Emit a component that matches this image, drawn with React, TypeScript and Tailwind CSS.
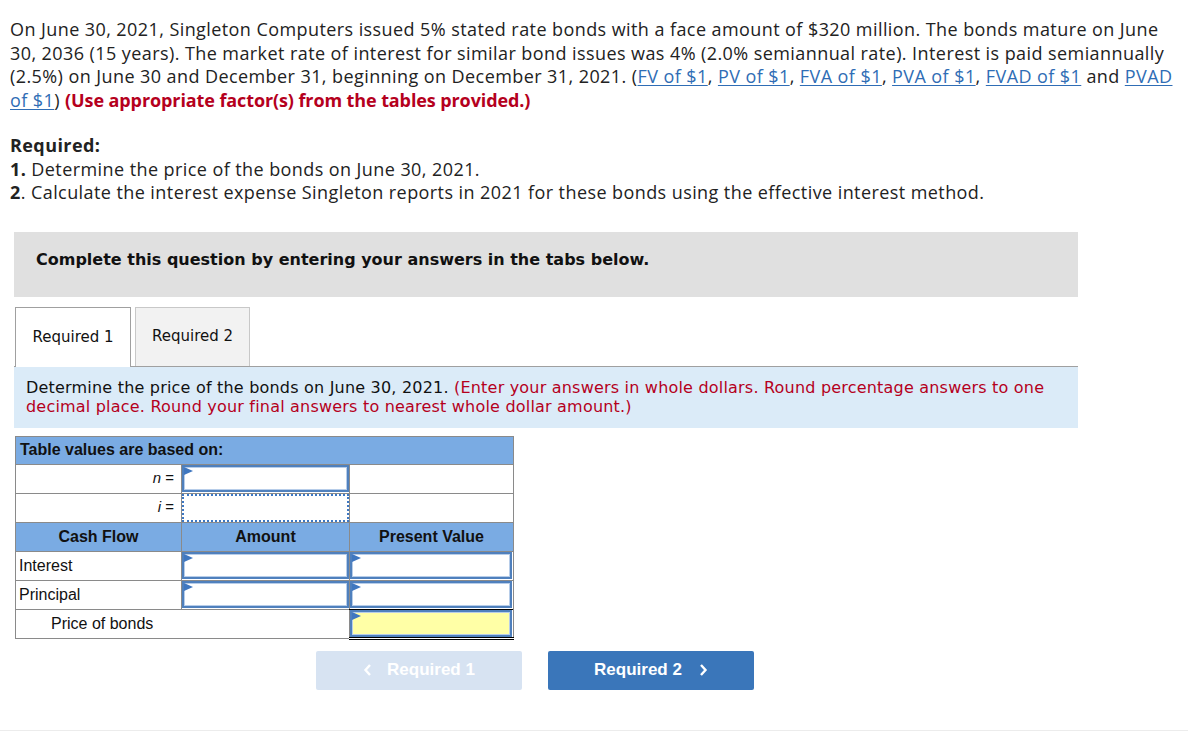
import React from "react";

const Link: React.FC<{ children: React.ReactNode }> = ({ children }) => (
  <a className="text-[#2f6db5] underline underline-offset-2 decoration-1">{children}</a>
);

// blue flag in the top-left corner of answer cells
const Flag = () => (
  <svg className="absolute left-0 top-0" width="9" height="9" viewBox="0 0 9 9">
    <path d="M0 0 L9 4 L0 8 Z" fill="#3f77c0" />
  </svg>
);

const AnswerCell: React.FC<{ yellow?: boolean; dotted?: boolean; flag?: boolean }> = ({
  yellow,
  dotted,
  flag = true,
}) => {
  if (dotted) {
    return <div className="h-[28px] border-2 border-dotted border-[#3d78c4] bg-white" />;
  }
  return (
    <div
      className={`relative h-[27px] border-2 border-[#4f80bd] ${yellow ? "bg-[#ffffa6]" : "bg-white"}`}
    >
      <div className="h-full w-full border border-[#b7cde9]" />
      {flag && <Flag />}
    </div>
  );
};

export default function App() {
  return (
    <div className="min-h-[735px] w-[1188px] bg-white text-[#222] font-['Open_Sans',sans-serif]">
      {/* Intro */}
      <div className="px-[10px] pt-[18px] text-[18px] leading-[23.5px] tracking-[0.42px]">
        <p className="whitespace-nowrap">
          On June 30, 2021, Singleton Computers issued 5% stated rate bonds with a face amount of $320 million. The bonds mature on June
          <br />
          30, 2036 (15 years). The market rate of interest for similar bond issues was 4% (2.0% semiannual rate). Interest is paid semiannually
          <br />
          (2.5%) on June 30 and December 31, beginning on December 31, 2021. (<Link>FV of $1</Link>, <Link>PV of $1</Link>,{" "}
          <Link>FVA of $1</Link>, <Link>PVA of $1</Link>, <Link>FVAD of $1</Link> and <Link>PVAD</Link>
          <br />
          <Link>of $1</Link>){" "}
          <span className="font-bold text-[#b5001d] tracking-[-0.1px]">(Use appropriate factor(s) from the tables provided.)</span>
        </p>

        <div className="mt-[22px]">
          <p className="font-bold">Required:</p>
          <p>
            <span className="font-bold">1.</span> Determine the price of the bonds on June 30, 2021.
          </p>
          <p>
            <span className="font-bold">2</span>. Calculate the interest expense Singleton reports in 2021 for these bonds using the effective interest method.
          </p>
        </div>
      </div>

      {/* Question panel */}
      <div className="ml-[14px] mt-[27px] w-[1064px]">
        <div className="flex h-[65px] items-center bg-[#e0e0e0] pl-[22px] pb-[8px] font-['DejaVu_Sans',sans-serif] text-[16px] font-bold text-[#111]">
          Complete this question by entering your answers in the tabs below.
        </div>

        {/* Tabs */}
        <div className="mt-[10px] flex items-end gap-[4px] border-b border-[#a0a0a0] pl-[1px] font-['DejaVu_Sans',sans-serif] text-[15px] text-[#111]">
          <div className="-mb-px flex h-[60px] w-[116px] items-center justify-center border border-b-0 border-[#a0a0a0] bg-white">
            Required 1
          </div>
          <div className="flex h-[59px] w-[115px] items-center justify-center border border-b-0 border-[#c8c8c8] bg-[#f2f2f2]">
            Required 2
          </div>
        </div>

        <div className="bg-[#dbebf8] px-[12px] pt-[11px] pb-[12px] font-['DejaVu_Sans',sans-serif] text-[16px] leading-[19px] tracking-[0.2px] text-[#111] whitespace-nowrap">
          Determine the price of the bonds on June 30, 2021.{" "}
          <span className="text-[#b5001d]">
            (Enter your answers in whole dollars. Round percentage answers to one
            <br />
            decimal place. Round your final answers to nearest whole dollar amount.)
          </span>
        </div>

        {/* Answer table */}
        <table className="mt-[8px] ml-[1px] border-collapse font-['Liberation_Sans',sans-serif] text-[16px] text-[#111]">
          <colgroup>
            <col className="w-[166px]" />
            <col className="w-[168px]" />
            <col className="w-[164px]" />
          </colgroup>
          <tbody>
            <tr className="h-[28px] bg-[#7aabe3]">
              <td colSpan={3} className="border border-[#8a8a8a] px-[4px] font-bold">
                Table values are based on:
              </td>
            </tr>
            <tr className="h-[29px]">
              <td className="border border-[#8a8a8a] pr-[7px] text-right italic text-[15px]">
                n <span className="not-italic">=</span>
              </td>
              <td className="border border-[#8a8a8a] p-0">
                <AnswerCell />
              </td>
              <td className="border border-[#8a8a8a]" />
            </tr>
            <tr className="h-[29px]">
              <td className="border border-[#8a8a8a] pr-[7px] text-right italic text-[15px]">
                i <span className="not-italic">=</span>
              </td>
              <td className="border border-[#8a8a8a] p-0">
                <AnswerCell dotted />
              </td>
              <td className="border border-[#8a8a8a]" />
            </tr>
            <tr className="h-[29px] bg-[#7aabe3] text-center font-bold">
              <td className="border border-[#8a8a8a]">Cash Flow</td>
              <td className="border border-[#8a8a8a]">Amount</td>
              <td className="border border-[#8a8a8a]">Present Value</td>
            </tr>
            <tr className="h-[29px]">
              <td className="border border-[#8a8a8a] px-[3px]">Interest</td>
              <td className="border border-[#8a8a8a] p-0">
                <AnswerCell />
              </td>
              <td className="border border-[#8a8a8a] p-0 pr-[1px]">
                <AnswerCell />
              </td>
            </tr>
            <tr className="h-[29px]">
              <td className="border border-[#8a8a8a] px-[3px]">Principal</td>
              <td className="border border-[#8a8a8a] p-0">
                <AnswerCell />
              </td>
              <td className="border border-[#8a8a8a] p-0 pr-[1px]">
                <AnswerCell />
              </td>
            </tr>
            <tr className="h-[29px]">
              <td colSpan={2} className="border border-[#8a8a8a] pl-[35px]">
                Price of bonds
              </td>
              <td className="border-x border-t border-b-[3px] border-t-black border-b-black border-double border-x-[#8a8a8a] p-0 pr-[1px]">
                <AnswerCell yellow />
              </td>
            </tr>
          </tbody>
        </table>

        {/* Navigation */}
        <div className="mt-[11px] flex gap-[26px] pl-[302px] font-['Liberation_Sans',sans-serif] text-[17px] font-bold text-white">
          <button className="flex h-[39px] w-[206px] items-center justify-center gap-[14px] rounded-[2px] bg-[#d7e3f2]">
            <svg width="10" height="14" viewBox="0 0 10 14">
              <path d="M7 2 L2.5 7 L7 12" stroke="white" strokeWidth="2.4" fill="none" />
            </svg>
            Required 1
          </button>
          <button className="flex h-[39px] w-[206px] items-center justify-center gap-[16px] rounded-[2px] bg-[#3a76ba]">
            Required 2
            <svg width="10" height="14" viewBox="0 0 10 14">
              <path d="M3 2 L7.5 7 L3 12" stroke="white" strokeWidth="2.4" fill="none" />
            </svg>
          </button>
        </div>
      </div>

      <div className="mt-[40px] border-b border-[#ececec]" />
    </div>
  );
}
